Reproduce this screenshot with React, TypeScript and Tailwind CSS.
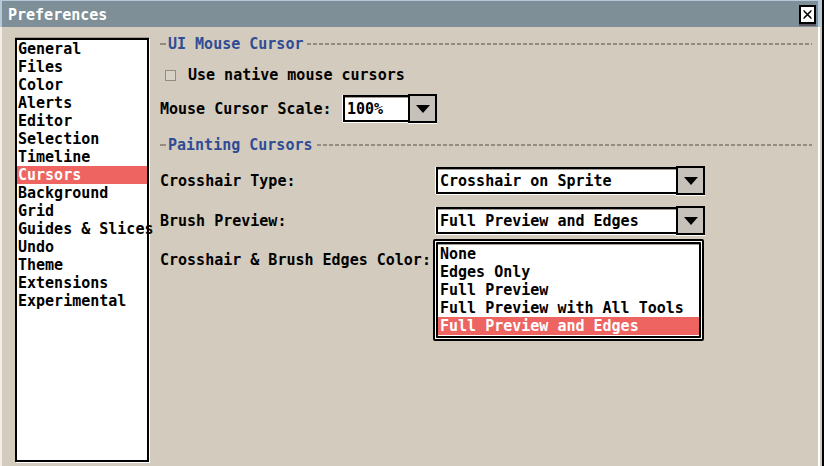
import React from "react";

const sections = [
  "General",
  "Files",
  "Color",
  "Alerts",
  "Editor",
  "Selection",
  "Timeline",
  "Cursors",
  "Background",
  "Grid",
  "Guides & Slices",
  "Undo",
  "Theme",
  "Extensions",
  "Experimental",
];

const previewModes = [
  "None",
  "Edges Only",
  "Full Preview",
  "Full Preview with All Tools",
  "Full Preview and Edges",
];

function Separator({ label }: { label: string }) {
  return (
    <div className="flex items-center h-[18px]">
      <div className="w-[6px] h-[2px] bg-[#968b82]" />
      <span className="ml-[2px] text-[#2f4c94]">{label}</span>
      <div className="ml-[4px] flex-1 h-[2px] bg-[repeating-linear-gradient(90deg,#968b82_0_4px,transparent_4px_6px)]" />
    </div>
  );
}

function ComboBox({
  value,
  entryWidth,
  children,
}: {
  value: string;
  entryWidth: string;
  children?: React.ReactNode;
}) {
  return (
    <div className="relative flex items-center">
      <div
        className={`${entryWidth} h-[27px] border-2 border-black bg-white shadow-[inset_0_1px_0_#a39a92,0_1px_0_#fff,-1px_0_0_#fff] pl-[2px] flex items-center whitespace-nowrap overflow-hidden`}
      >
        {value}
      </div>
      <div className="w-[29px] h-[29px] -ml-[2px] border-2 border-black bg-[#c6c2bb] shadow-[0_1px_0_#fff] flex items-center justify-center">
        <svg width="14" height="8" viewBox="0 0 14 8">
          <path d="M0 0H14L7 8Z" fill="#000" />
        </svg>
      </div>
      {children}
    </div>
  );
}

export default function App() {
  return (
    <div className="w-[824px] h-[466px] overflow-hidden flex bg-[#d3cbbe] text-black text-[15px] leading-[18px] font-['DejaVu_Sans_Mono',monospace] font-bold">
      <div className="flex-1 flex flex-col">
        {/* title bar */}
        <div className="h-[27px] border-t border-[#b4cad9] border-l-2 border-l-[#b4cad9] bg-[#7e8f98] flex items-center pl-[6px] pr-[2px] text-white">
          <span className="pt-[1px]">Preferences</span>
          <div className="ml-auto w-[17px] h-[19px] border-2 border-black bg-white shadow-[0_2px_0_#5a5560] flex items-center justify-center mt-[1px]">
            <svg width="9" height="9" viewBox="0 0 9 9">
              <path d="M1 1L8 8M8 1L1 8" stroke="#000" strokeWidth="1.6" />
              <path d="M0 0.5H2M7 0.5H9M0 8.5H2M7 8.5H9" stroke="#777" strokeWidth="1" />
            </svg>
          </div>
        </div>

        {/* body */}
        <div className="flex-1 flex border-l-2 border-[#f2efe9] pl-[13px] pt-[8px]">
          {/* section list */}
          <div className="mt-[3px] w-[134px] h-[424px] border-2 border-black bg-white shadow-[1px_1px_0_#fff,0_-1px_0_#a39a92] flex flex-col">
            {sections.map((s) => (
              <div
                key={s}
                className={`h-[18px] pl-[1px] whitespace-nowrap ${
                  s === "Cursors" ? "bg-[#ed6461] text-white" : ""
                }`}
              >
                {s}
              </div>
            ))}
          </div>

          {/* cursor settings */}
          <div className="ml-[11px] flex-1 pr-[6px] flex flex-col">
            <Separator label="UI Mouse Cursor" />

            <div className="mt-[13px] h-[18px] flex items-center pl-[5px]">
              <div className="w-[11px] h-[11px] border border-[#968b82] bg-[#d8d1c6]" />
              <span className="ml-[12px]">Use native mouse cursors</span>
            </div>

            <div className="mt-[10px] h-[29px] flex items-center">
              <span className="w-[183px]">Mouse Cursor Scale:</span>
              <ComboBox value="100%" entryWidth="w-[67px]" />
            </div>

            <div className="mt-[13px]">
              <Separator label="Painting Cursors" />
            </div>

            <div className="mt-[12px] h-[29px] flex items-center">
              <span className="w-[276px]">Crosshair Type:</span>
              <ComboBox value="Crosshair on Sprite" entryWidth="w-[242px]" />
            </div>

            <div className="mt-[11px] h-[29px] flex items-center">
              <span className="w-[276px]">Brush Preview:</span>
              <ComboBox value="Full Preview and Edges" entryWidth="w-[242px]">
                {/* open popup list */}
                <div className="absolute left-[-3px] top-[33px] w-[271px] h-[102px] border-2 border-black rounded-[2px] bg-white p-[1px] z-10">
                  <div className="h-full border-2 border-black rounded-[1px] shadow-[inset_0_1px_0_#a39a92] pt-[1px] flex flex-col">
                    {previewModes.map((m) => (
                      <div
                        key={m}
                        className={`h-[18px] pl-[2px] whitespace-nowrap ${
                          m === "Full Preview and Edges" ? "bg-[#ed6461] text-white" : ""
                        }`}
                      >
                        {m}
                      </div>
                    ))}
                  </div>
                </div>
              </ComboBox>
            </div>

            <div className="mt-[16px] h-[18px] flex items-center">
              <span>Crosshair &amp; Brush Edges Color:</span>
            </div>
          </div>
        </div>
      </div>

      {/* right window frame */}
      <div className="flex">
        <div className="w-[2px] flex flex-col">
          <div className="h-[27px] bg-[#b4cad9]" />
          <div className="flex-1 bg-white" />
        </div>
        <div className="w-[2px] flex flex-col">
          <div className="h-[27px] bg-[#b4cad9]" />
          <div className="flex-1 bg-[#d3cbbe]" />
        </div>
        <div className="w-[2px] bg-black" />
      </div>
    </div>
  );
}
